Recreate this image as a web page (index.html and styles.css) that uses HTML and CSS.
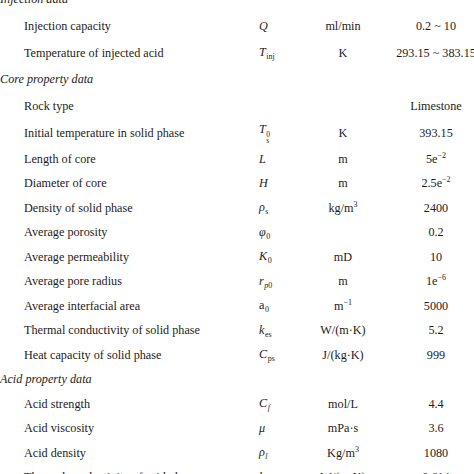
FILE: index.html
```html
<!DOCTYPE html>
<html>
<head>
<meta charset="utf-8">
<link rel="stylesheet" href="styles.css">
</head>
<body>
<div class="page">
  <div class="row tall head"><span class="sec">Injection data</span></div>
  <div class="row tall">
    <span class="lab">Injection capacity</span>
    <span class="sym"><i>Q</i></span>
    <span class="unit">ml/min</span>
    <span class="val">0.2 ~ 10</span>
  </div>
  <div class="row tall">
    <span class="lab">Temperature of injected acid</span>
    <span class="sym"><i>T</i><span class="sb">inj</span></span>
    <span class="unit">K</span>
    <span class="val">293.15 ~ 383.15</span>
  </div>
  <div class="row tall head"><span class="sec">Core property data</span></div>
  <div class="row tall">
    <span class="lab">Rock type</span>
    <span class="sym"></span>
    <span class="unit"></span>
    <span class="val">Limestone</span>
  </div>
  <div class="row tall">
    <span class="lab">Initial temperature in solid phase</span>
    <span class="sym"><i>T</i><span class="stack"><span>0</span><span>s</span></span></span>
    <span class="unit">K</span>
    <span class="val">393.15</span>
  </div>
  <div class="row">
    <span class="lab">Length of core</span>
    <span class="sym"><i>L</i></span>
    <span class="unit">m</span>
    <span class="val">5e<sup class="sp">−2</sup></span>
  </div>
  <div class="row">
    <span class="lab">Diameter of core</span>
    <span class="sym"><i>H</i></span>
    <span class="unit">m</span>
    <span class="val">2.5e<sup class="sp">−2</sup></span>
  </div>
  <div class="row">
    <span class="lab">Density of solid phase</span>
    <span class="sym"><i>ρ</i><span class="sb">s</span></span>
    <span class="unit">kg/m<sup class="sp">3</sup></span>
    <span class="val">2400</span>
  </div>
  <div class="row">
    <span class="lab">Average porosity</span>
    <span class="sym"><i>φ</i><span class="sb">0</span></span>
    <span class="unit"></span>
    <span class="val">0.2</span>
  </div>
  <div class="row">
    <span class="lab">Average permeability</span>
    <span class="sym"><i>K</i><span class="sb">0</span></span>
    <span class="unit">mD</span>
    <span class="val">10</span>
  </div>
  <div class="row">
    <span class="lab">Average pore radius</span>
    <span class="sym"><i>r</i><span class="sb"><i>p</i>0</span></span>
    <span class="unit">m</span>
    <span class="val">1e<sup class="sp">−6</sup></span>
  </div>
  <div class="row">
    <span class="lab">Average interfacial area</span>
    <span class="sym">a<span class="sb">0</span></span>
    <span class="unit">m<sup class="sp">−1</sup></span>
    <span class="val">5000</span>
  </div>
  <div class="row">
    <span class="lab">Thermal conductivity of solid phase</span>
    <span class="sym"><i>k</i><span class="sb">es</span></span>
    <span class="unit">W/(m·K)</span>
    <span class="val">5.2</span>
  </div>
  <div class="row">
    <span class="lab">Heat capacity of solid phase</span>
    <span class="sym"><i>C</i><span class="sb">ps</span></span>
    <span class="unit">J/(kg·K)</span>
    <span class="val">999</span>
  </div>
  <div class="row head"><span class="sec">Acid property data</span></div>
  <div class="row">
    <span class="lab">Acid strength</span>
    <span class="sym"><i>C</i><span class="sb"><i>f</i></span></span>
    <span class="unit">mol/L</span>
    <span class="val">4.4</span>
  </div>
  <div class="row">
    <span class="lab">Acid viscosity</span>
    <span class="sym"><i>μ</i></span>
    <span class="unit">mPa·s</span>
    <span class="val">3.6</span>
  </div>
  <div class="row">
    <span class="lab">Acid density</span>
    <span class="sym"><i>ρ</i><span class="sb"><i>l</i></span></span>
    <span class="unit">Kg/m<sup class="sp">3</sup></span>
    <span class="val">1080</span>
  </div>
  <div class="row">
    <span class="lab">Thermal conductivity of acid phase</span>
    <span class="sym"><i>k</i><span class="sb"><i>f</i></span></span>
    <span class="unit">W/(m·K)</span>
    <span class="val">0.614</span>
  </div>
</div>
</body>
</html>
```
FILE: styles.css
```css
html, body {
  margin: 0;
  padding: 0;
  background: #ffffff;
}
body {
  width: 474px;
  height: 474px;
  overflow: hidden;
  font-family: "Liberation Serif", "Times New Roman", serif;
  font-size: 12.2px;
  color: #1e1b1c;
}
.page {
  margin-top: -13.9px;
  display: flex;
  flex-direction: column;
}
.row {
  display: grid;
  grid-template-columns: 235px 50px 68px 118px;
  padding-left: 24px;
  height: 24.5px;
  align-items: center;
  white-space: nowrap;
}
.row.tall {
  height: 26.8px;
}
.row.head {
  display: flex;
  padding-left: 0;
}
.sec {
  font-style: italic;
}
.sym {
  text-align: left;
}
.sym i {
  font-style: italic;
}
.unit, .val {
  text-align: center;
}
.sb {
  font-size: 8px;
  vertical-align: -3px;
  margin-left: 0.5px;
}
.sp {
  font-size: 8px;
  vertical-align: 5px;
  line-height: 0;
}
.stack {
  display: inline-flex;
  flex-direction: column;
  font-size: 7.5px;
  line-height: 6.5px;
  vertical-align: -4px;
  margin-left: 0.5px;
}
```
